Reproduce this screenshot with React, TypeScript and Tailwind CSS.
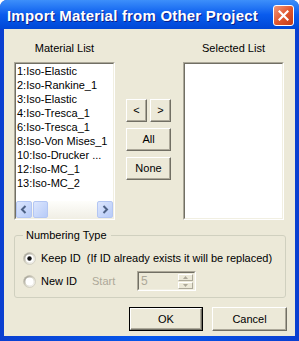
const materials = [
  '1:Iso-Elastic',
  '2:Iso-Rankine_1',
  '3:Iso-Elastic',
  '4:Iso-Tresca_1',
  '6:Iso-Tresca_1',
  '8:Iso-Von Mises_1',
  '10:Iso-Drucker ...',
  '12:Iso-MC_1',
  '13:Iso-MC_2',
];

function Radio({ checked }: { checked?: boolean }) {
  const id = checked ? 'rg1' : 'rg2';
  return (
    <svg width="13" height="13" viewBox="0 0 13 13" className="shrink-0">
      <defs>
        <linearGradient id={id} x1="0" y1="0" x2="1" y2="1">
          <stop offset="0" stopColor="#8C8A7F" />
          <stop offset="0.5" stopColor="#DAD8CC" />
          <stop offset="1" stopColor="#FFFFFF" />
        </linearGradient>
      </defs>
      <circle cx="6.5" cy="6.5" r="6" fill={`url(#${id})`} stroke="#C2BFB0" strokeWidth="0.6" />
      <circle cx="6.5" cy="6.5" r="4" fill="#FFFFFF" />
      {checked && <circle cx="6.5" cy="6.5" r="2.2" fill="#111111" />}
    </svg>
  );
}

function ScrollBtn({ dir }: { dir: 'left' | 'right' }) {
  return (
    <div className="flex h-[17px] w-[16px] items-center justify-center rounded-[2px] border border-[#B3C6F3] bg-gradient-to-br from-[#DCE6FD] to-[#B7CBF8]">
      <svg width="8" height="9" viewBox="0 0 8 9">
        <path
          d={dir === 'left' ? 'M5.5 1 L2 4.5 L5.5 8' : 'M2.5 1 L6 4.5 L2.5 8'}
          fill="none"
          stroke="#4D6185"
          strokeWidth="2"
        />
      </svg>
    </div>
  );
}

function Btn({ children, w }: { children: React.ReactNode; w: string }) {
  return (
    <div className={`${w} h-[23px]`}>
      <div className="flex h-full w-full items-center justify-center border-t border-l border-t-white border-l-white border-r border-b border-r-[#716F64] border-b-[#716F64] bg-[#ECE9D8] shadow-[inset_-1px_-1px_0_#ACA899] text-[11px] leading-none text-black">
        {children}
      </div>
    </div>
  );
}

function Sunken({ className, children }: { className: string; children?: React.ReactNode }) {
  return (
    <div className={`${className} border border-t-[#ACA899] border-l-[#ACA899] border-r-white border-b-white`}>
      <div className="flex h-full w-full flex-col border border-t-[#716F64] border-l-[#716F64] border-r-[#F1EFE2] border-b-[#F1EFE2]">
        {children}
      </div>
    </div>
  );
}

export default function App() {
  return (
    <div className="h-[341px] w-[299px] bg-white font-['Liberation_Sans',Arial,sans-serif]">
      <div className="flex h-full w-full flex-col overflow-hidden rounded-t-[7px] bg-gradient-to-r from-[#0A3FD0] via-[#0658EC] to-[#0A3FD0]">
        {/* Title bar */}
        <div className="flex h-[29px] shrink-0 items-center justify-between bg-gradient-to-b from-[#3D8FFA] via-[#0A5CEE] to-[#0047D6] pl-[7px] pr-[5px] pt-[1px]">
          <span className="text-[15px] font-bold leading-none tracking-[0.2px] text-white [text-shadow:1px_1px_0_#0C1F8C]">
            Import Material from Other Project
          </span>
          <div className="flex h-[21px] w-[21px] items-center justify-center rounded-[3px] border border-white bg-gradient-to-br from-[#F0977A] via-[#E2582E] to-[#C23A17]">
            <svg width="11" height="11" viewBox="0 0 11 11">
              <path d="M1.5 1.5 L9.5 9.5 M9.5 1.5 L1.5 9.5" stroke="#FFFFFF" strokeWidth="2.2" strokeLinecap="square" />
            </svg>
          </div>
        </div>

        {/* Body */}
        <div className="mx-[4px] mb-[5px] flex flex-1 flex-col bg-[#ECE9D8] pl-[10px] text-[11px] text-black">
          <div className="flex items-start">
            {/* Material list */}
            <div className="flex w-[101px] flex-col">
              <div className="mt-[12px] h-[14px] text-center leading-[14px]">Material List</div>
              <Sunken className="mt-[7px] h-[158px] w-[101px] bg-white">
                <div className="flex-1 pl-[1px]">
                  {materials.map((m) => (
                    <div key={m} className="h-[14px] whitespace-nowrap leading-[14px]">
                      {m}
                    </div>
                  ))}
                </div>
                <div className="flex h-[17px] bg-gradient-to-b from-[#FEFEFB] to-[#F1EFE6]">
                  <ScrollBtn dir="left" />
                  <div className="ml-[1px] h-[17px] w-[15px] rounded-[2px] border border-[#B3C6F3] bg-gradient-to-br from-[#DCE6FD] to-[#B7CBF8]" />
                  <div className="flex-1" />
                  <ScrollBtn dir="right" />
                </div>
              </Sunken>
            </div>

            {/* Move buttons */}
            <div className="ml-[11px] mt-[70px] flex w-[45px] flex-col gap-[6px]">
              <div className="flex gap-[3px]">
                <Btn w="w-[21px]">&lt;</Btn>
                <Btn w="w-[21px]">&gt;</Btn>
              </div>
              <Btn w="w-[45px]">All</Btn>
              <Btn w="w-[45px]">None</Btn>
            </div>

            {/* Selected list */}
            <div className="ml-[12px] flex w-[101px] flex-col">
              <div className="mt-[12px] h-[14px] text-center leading-[14px]">Selected List</div>
              <Sunken className="mt-[7px] h-[158px] w-[101px] bg-white" />
            </div>
          </div>

          {/* Numbering type */}
          <fieldset className="mt-[8px] w-[272px] rounded-[3px] border border-[#D0D0BF] pb-[6px] pl-[8px]">
            <legend className="h-[14px] pl-[3px] pr-[4px] leading-[14px]">Numbering Type</legend>
            <div className="mt-[6px] flex h-[20px] items-center">
              <Radio checked />
              <span className="ml-[5px] whitespace-nowrap">Keep ID&nbsp; (If ID already exists it will be replaced)</span>
            </div>
            <div className="mt-[3px] flex h-[20px] items-center">
              <Radio />
              <span className="ml-[5px] w-[51px]">New ID</span>
              <span className="w-[45px] text-[#ACA899]">Start</span>
              <Sunken className="h-[20px] w-[59px] bg-[#ECE9D8]">
                <div className="flex h-full items-center justify-between">
                  <span className="pl-[2px] text-[12px] text-[#ACA899]">5</span>
                  <div className="mr-[1px] flex flex-col gap-[1px]">
                    {['up', 'down'].map((d) => (
                      <div
                        key={d}
                        className="flex h-[7px] w-[15px] items-center justify-center border border-t-white border-l-white border-r-[#ACA899] border-b-[#ACA899] bg-[#ECE9D8]"
                      >
                        <svg width="5" height="3" viewBox="0 0 5 3">
                          <path d={d === 'up' ? 'M0 3 L2.5 0 L5 3 Z' : 'M0 0 L2.5 3 L5 0 Z'} fill="#ACA899" />
                        </svg>
                      </div>
                    ))}
                  </div>
                </div>
              </Sunken>
            </div>
          </fieldset>

          {/* Dialog buttons */}
          <div className="mt-[9px] flex justify-end gap-[9px] pr-[8px]">
            <div className="h-[24px] w-[74px] border border-black">
              <div className="flex h-full w-full items-center justify-center border-t border-l border-t-white border-l-white border-r border-b border-r-[#716F64] border-b-[#716F64] shadow-[inset_-1px_-1px_0_#ACA899]">
                OK
              </div>
            </div>
            <div className="flex h-[24px] w-[75px] items-center justify-center border-t border-l border-t-white border-l-white border-r border-b border-r-[#716F64] border-b-[#716F64] shadow-[inset_-1px_-1px_0_#ACA899]">
              Cancel
            </div>
          </div>
        </div>
      </div>
    </div>
  );
}
